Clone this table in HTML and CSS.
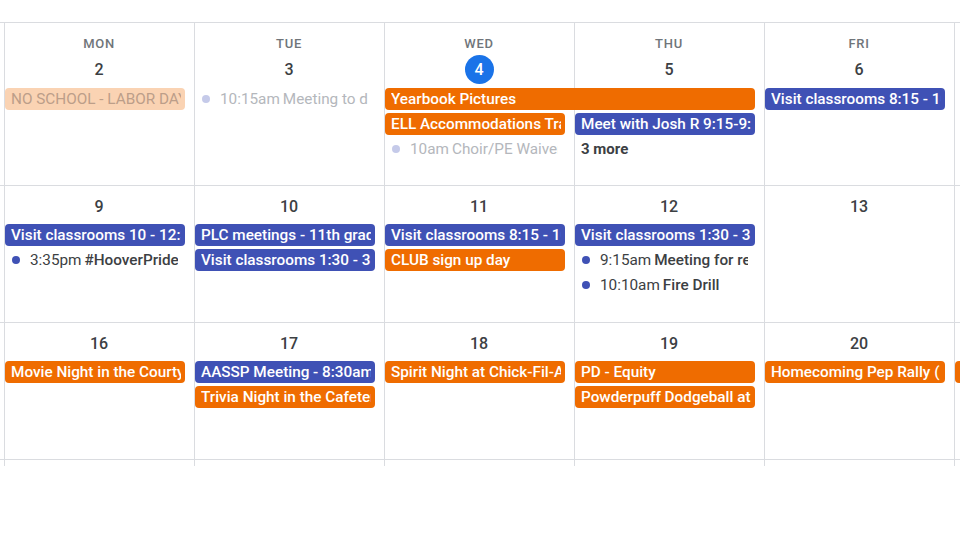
FILE: index.html
```html
<!DOCTYPE html>
<html lang="en">
<head>
<meta charset="utf-8">
<title>Calendar</title>
<link rel="stylesheet" href="styles.css">
</head>
<body>
<div class="cal">
  <div class="week w1">
    <div class="bg c2"></div><div class="bg c3"></div><div class="bg c4"></div><div class="bg c5"></div><div class="bg c6"></div><div class="bg c7"></div>
    <div class="head c2"><div class="dow">MON</div><div class="date"><span>2</span></div></div>
    <div class="head c3"><div class="dow">TUE</div><div class="date"><span>3</span></div></div>
    <div class="head c4"><div class="dow">WED</div><div class="date"><span class="today">4</span></div></div>
    <div class="head c5"><div class="dow">THU</div><div class="date"><span>5</span></div></div>
    <div class="head c6"><div class="dow">FRI</div><div class="date"><span>6</span></div></div>

    <div class="chip peach c2 r1"><span class="t">NO SCHOOL - LABOR DAY</span></div>
    <div class="ev faded c3 r1"><i class="dot"></i><span class="time">10:15am</span> <span class="title">Meeting to discuss</span></div>
    <div class="chip orange c4 s2 r1"><span class="t">Yearbook Pictures</span></div>
    <div class="chip orange c4 r2"><span class="t">ELL Accommodations Training</span></div>
    <div class="ev faded c4 r3"><i class="dot"></i><span class="time">10am</span> <span class="title">Choir/PE Waiver</span></div>
    <div class="chip blue c5 r2"><span class="t">Meet with Josh R 9:15-9:45</span></div>
    <div class="more c5 r3">3 more</div>
    <div class="chip blue c6 r1"><span class="t">Visit classrooms 8:15 - 10:00</span></div>
  </div>

  <div class="week w2">
    <div class="bg c2"></div><div class="bg c3"></div><div class="bg c4"></div><div class="bg c5"></div><div class="bg c6"></div><div class="bg c7"></div>
    <div class="head c2"><div class="date"><span>9</span></div></div>
    <div class="head c3"><div class="date"><span>10</span></div></div>
    <div class="head c4"><div class="date"><span>11</span></div></div>
    <div class="head c5"><div class="date"><span>12</span></div></div>
    <div class="head c6"><div class="date"><span>13</span></div></div>

    <div class="chip blue c2 r1"><span class="t">Visit classrooms 10 - 12:30</span></div>
    <div class="ev c2 r2"><i class="dot"></i><span class="time">3:35pm</span> <span class="title">#HooverPride</span></div>
    <div class="chip blue c3 r1"><span class="t">PLC meetings - 11th grade</span></div>
    <div class="chip blue c3 r2"><span class="t">Visit classrooms 1:30 - 3:00</span></div>
    <div class="chip blue c4 r1"><span class="t">Visit classrooms 8:15 - 10:00</span></div>
    <div class="chip orange c4 r2"><span class="t">CLUB sign up day</span></div>
    <div class="chip blue c5 r1"><span class="t">Visit classrooms 1:30 - 3:00</span></div>
    <div class="ev c5 r2"><i class="dot"></i><span class="time">9:15am</span> <span class="title">Meeting for review</span></div>
    <div class="ev c5 r3"><i class="dot"></i><span class="time">10:10am</span> <span class="title">Fire Drill</span></div>
  </div>

  <div class="week w3">
    <div class="bg c2"></div><div class="bg c3"></div><div class="bg c4"></div><div class="bg c5"></div><div class="bg c6"></div><div class="bg c7"></div>
    <div class="head c2"><div class="date"><span>16</span></div></div>
    <div class="head c3"><div class="date"><span>17</span></div></div>
    <div class="head c4"><div class="date"><span>18</span></div></div>
    <div class="head c5"><div class="date"><span>19</span></div></div>
    <div class="head c6"><div class="date"><span>20</span></div></div>

    <div class="chip orange c2 r1"><span class="t">Movie Night in the Courtyard</span></div>
    <div class="chip blue c3 r1"><span class="t">AASSP Meeting - 8:30am</span></div>
    <div class="chip orange c3 r2"><span class="t">Trivia Night in the Cafeteria</span></div>
    <div class="chip orange c4 r1"><span class="t">Spirit Night at Chick-Fil-A</span></div>
    <div class="chip orange c5 r1"><span class="t">PD - Equity</span></div>
    <div class="chip orange c5 r2"><span class="t">Powderpuff Dodgeball at</span></div>
    <div class="chip orange c6 r1"><span class="t">Homecoming Pep Rally (</span></div>
    <div class="chip orange c7 r1"><span class="t">Football</span></div>
  </div>

  <div class="week w4">
    <div class="bg c2"></div><div class="bg c3"></div><div class="bg c4"></div><div class="bg c5"></div><div class="bg c6"></div><div class="bg c7"></div>
  </div>
</div>
</body>
</html>
```

FILE: styles.css
```css
* { box-sizing: border-box; }

html, body {
  margin: 0;
  padding: 0;
  background: #ffffff;
}

body {
  font-family: Roboto, "Liberation Sans", Arial, sans-serif;
  color: #3c4043;
  width: 960px;
  height: 540px;
  overflow: hidden;
}

.cal {
  margin-top: 22px;
  border-top: 1px solid #dadce0;
  width: 960px;
  overflow: hidden;
}

.week {
  display: grid;
  grid-template-columns: 4px repeat(5, 190px) 1fr;
  border-bottom: 1px solid #dadce0;
  overflow: hidden;
}

.w1 { height: 163px; grid-template-rows: 65px repeat(3, 25px) 1fr; }
.w2, .w3 { height: 137px; grid-template-rows: 38px repeat(3, 25px) 1fr; }
.w4 { height: 6px; grid-template-rows: 1fr; border-bottom: none; }

.bg {
  grid-row: 1 / -1;
  border-left: 1px solid #dadce0;
}

.c2 { grid-column-start: 2; }
.c3 { grid-column-start: 3; }
.c4 { grid-column-start: 4; }
.c5 { grid-column-start: 5; }
.c6 { grid-column-start: 6; }
.c7 { grid-column-start: 7; }
.s2 { grid-column-end: span 2; }

.head { grid-row: 1; text-align: center; }
.r1 { grid-row: 2; }
.r2 { grid-row: 3; }
.r3 { grid-row: 4; }

.dow {
  padding-top: 13px;
  font-size: 13px;
  line-height: 16px;
  font-weight: 500;
  letter-spacing: 0.7px;
  color: #70757a;
}

.date {
  height: 24px;
  margin-top: 8px;
  display: flex;
  justify-content: center;
  align-items: center;
  font-size: 16px;
  font-weight: 500;
  color: #3c4043;
}
.w1 .date { margin-top: 5px; }

.date .today {
  flex-shrink: 0;
  width: 29px;
  height: 29px;
  border-radius: 50%;
  background: #1a73e8;
  color: #ffffff;
  font-weight: 500;
  display: flex;
  align-items: center;
  justify-content: center;
}

.chip {
  align-self: start;
  height: 22px;
  line-height: 22px;
  margin: 0 9px 0 1px;
  padding: 0 4px 0 6px;
  border-radius: 4px;
  font-size: 15.3px;
  font-weight: 500;
  color: #ffffff;
  white-space: nowrap;
  overflow: hidden;
}
.chip .t {
  display: block;
  overflow: hidden;
}

.orange { background: #ef6c00; }
.blue { background: #3f51b5; }
.peach { background: #fad3b3; color: #bc9e89; font-weight: 400; }

.ev {
  align-self: start;
  height: 22px;
  display: flex;
  align-items: center;
  padding-left: 8px;
  margin-right: 16px;
  font-size: 15.3px;
  white-space: nowrap;
  overflow: hidden;
  color: #3c4043;
}
.ev .dot {
  width: 8px;
  height: 8px;
  border-radius: 50%;
  background: #3f51b5;
  margin-right: 10px;
  flex-shrink: 0;
}
.ev .time { margin-right: 3px; }
.ev .title { font-weight: 500; }

.ev.faded { color: #b4b7bc; }
.ev.faded .dot { background: #c5cae9; }
.ev.faded .title { font-weight: 400; }

.more {
  align-self: start;
  height: 22px;
  line-height: 22px;
  padding-left: 7px;
  font-size: 15px;
  font-weight: 700;
  color: #3c4043;
}
```
